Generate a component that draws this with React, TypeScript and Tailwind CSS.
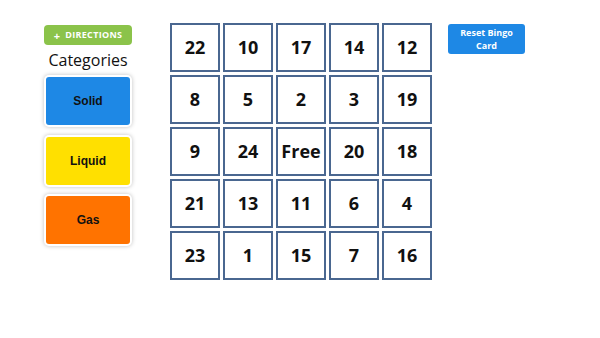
const NUMBERS: (number | string)[] = [
  22, 10, 17, 14, 12,
  8, 5, 2, 3, 19,
  9, 24, 'Free', 20, 18,
  21, 13, 11, 6, 4,
  23, 1, 15, 7, 16,
];

const CATEGORIES = [
  { label: 'Solid', bg: 'bg-[#1e88e5]' },
  { label: 'Liquid', bg: 'bg-[#ffe000]' },
  { label: 'Gas', bg: 'bg-[#ff7300]' },
];

export default function App() {
  return (
    <div className="flex h-[338px] w-[600px] items-start bg-white pl-[44px] pt-[23px] font-['Open_Sans',sans-serif]">
      <div className="flex w-[88px] flex-col items-stretch">
        <button
          type="button"
          className="mt-[2px] flex h-[20px] items-center justify-center gap-[5px] rounded-[4px] bg-[#8bc34a] text-[9px] font-bold tracking-[0.3px] text-white"
        >
          <span className="text-[11px] leading-none">+</span>
          DIRECTIONS
        </button>
        <div className="mt-[4px] text-center text-[16px] leading-[22px] text-[#111]">Categories</div>
        <div className="mt-[4px] flex flex-col gap-[7.5px]">
          {CATEGORIES.map((c) => (
            <div
              key={c.label}
              className="rounded-[5px] bg-white p-[2px] shadow-[0_0_4px_rgba(0,0,0,0.25)]"
            >
              <div
                className={`flex h-[48px] items-center justify-center rounded-[3px] ${c.bg} font-['Liberation_Sans',Arial,sans-serif] text-[12px] font-bold text-[#111]`}
              >
                {c.label}
              </div>
            </div>
          ))}
        </div>
      </div>

      <div className="ml-[38px] grid grid-cols-[repeat(5,50px)] grid-rows-[repeat(5,49px)] gap-[3px]">
        {NUMBERS.map((n, i) => (
          <div
            key={i}
            className="flex items-center justify-center border-2 border-[#4a6790] bg-white text-[18px] font-bold text-[#111]"
          >
            {n}
          </div>
        ))}
      </div>

      <button
        type="button"
        className="ml-[16px] mt-[1px] flex h-[30px] w-[77px] items-center justify-center rounded-[3px] bg-[#1e88e5] text-center text-[9px] font-bold leading-[13px] text-white"
      >
        Reset Bingo
        <br />
        Card
      </button>
    </div>
  );
}
